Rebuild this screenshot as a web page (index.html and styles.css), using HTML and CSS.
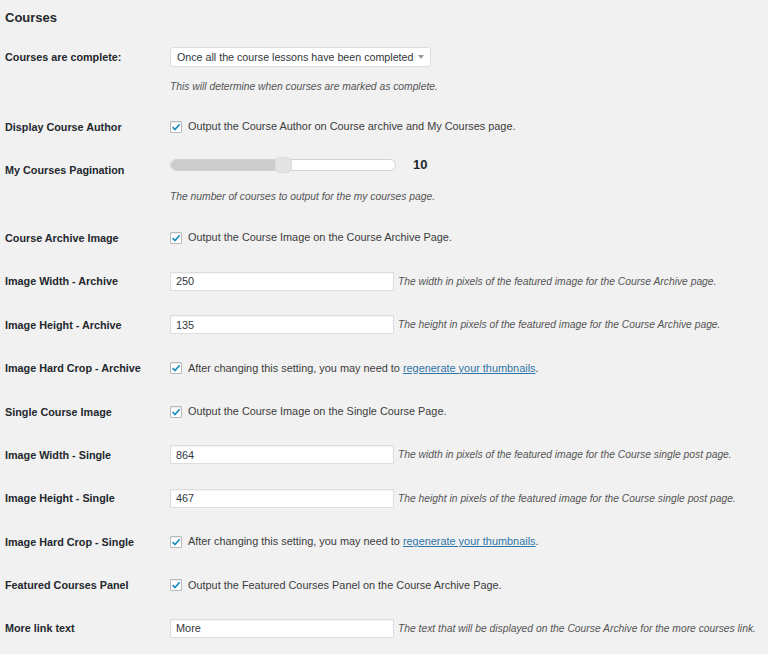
FILE: index.html
```html
<!DOCTYPE html>
<html lang="en">
<head>
<meta charset="utf-8">
<title>Courses settings</title>
<link rel="stylesheet" href="styles.css">
</head>
<body>
<div class="wrap">
  <h2 class="title">Courses</h2>

  <div class="row row-select">
    <div class="label">Courses are complete:</div>
    <div class="field">
      <div class="select">
        <span class="sel-text">Once all the course lessons have been completed</span>
        <span class="caret"></span>
      </div>
      <p class="desc desc-block">This will determine when courses are marked as complete.</p>
    </div>
  </div>

  <div class="row">
    <div class="label">Display Course Author</div>
    <div class="field line">
      <span class="cb"><svg viewBox="0 0 12 12" width="12" height="12"><path d="M2.6 6.2 L5 8.6 L9.6 3.2" fill="none" stroke="#1e8cbe" stroke-width="1.7"/></svg></span>
      <span class="text">Output the Course Author on Course archive and My Courses page.</span>
    </div>
  </div>

  <div class="row row-slider">
    <div class="label">My Courses Pagination</div>
    <div class="field">
      <div class="slider-line">
        <div class="track">
          <div class="fill"></div>
          <div class="thumb"></div>
        </div>
        <span class="value">10</span>
      </div>
      <p class="desc desc-block">The number of courses to output for the my courses page.</p>
    </div>
  </div>

  <div class="row">
    <div class="label">Course Archive Image</div>
    <div class="field line">
      <span class="cb"><svg viewBox="0 0 12 12" width="12" height="12"><path d="M2.6 6.2 L5 8.6 L9.6 3.2" fill="none" stroke="#1e8cbe" stroke-width="1.7"/></svg></span>
      <span class="text">Output the Course Image on the Course Archive Page.</span>
    </div>
  </div>

  <div class="row">
    <div class="label">Image Width - Archive</div>
    <div class="field line">
      <span class="input">250</span>
      <span class="desc">The width in pixels of the featured image for the Course Archive page.</span>
    </div>
  </div>

  <div class="row">
    <div class="label">Image Height - Archive</div>
    <div class="field line">
      <span class="input">135</span>
      <span class="desc">The height in pixels of the featured image for the Course Archive page.</span>
    </div>
  </div>

  <div class="row">
    <div class="label">Image Hard Crop - Archive</div>
    <div class="field line">
      <span class="cb"><svg viewBox="0 0 12 12" width="12" height="12"><path d="M2.6 6.2 L5 8.6 L9.6 3.2" fill="none" stroke="#1e8cbe" stroke-width="1.7"/></svg></span>
      <span class="text">After changing this setting, you may need to <a href="#">regenerate your thumbnails</a>.</span>
    </div>
  </div>

  <div class="row">
    <div class="label">Single Course Image</div>
    <div class="field line">
      <span class="cb"><svg viewBox="0 0 12 12" width="12" height="12"><path d="M2.6 6.2 L5 8.6 L9.6 3.2" fill="none" stroke="#1e8cbe" stroke-width="1.7"/></svg></span>
      <span class="text">Output the Course Image on the Single Course Page.</span>
    </div>
  </div>

  <div class="row">
    <div class="label">Image Width - Single</div>
    <div class="field line">
      <span class="input">864</span>
      <span class="desc">The width in pixels of the featured image for the Course single post page.</span>
    </div>
  </div>

  <div class="row">
    <div class="label">Image Height - Single</div>
    <div class="field line">
      <span class="input">467</span>
      <span class="desc">The height in pixels of the featured image for the Course single post page.</span>
    </div>
  </div>

  <div class="row">
    <div class="label">Image Hard Crop - Single</div>
    <div class="field line">
      <span class="cb"><svg viewBox="0 0 12 12" width="12" height="12"><path d="M2.6 6.2 L5 8.6 L9.6 3.2" fill="none" stroke="#1e8cbe" stroke-width="1.7"/></svg></span>
      <span class="text">After changing this setting, you may need to <a href="#">regenerate your thumbnails</a>.</span>
    </div>
  </div>

  <div class="row">
    <div class="label">Featured Courses Panel</div>
    <div class="field line">
      <span class="cb"><svg viewBox="0 0 12 12" width="12" height="12"><path d="M2.6 6.2 L5 8.6 L9.6 3.2" fill="none" stroke="#1e8cbe" stroke-width="1.7"/></svg></span>
      <span class="text">Output the Featured Courses Panel on the Course Archive Page.</span>
    </div>
  </div>

  <div class="row">
    <div class="label">More link text</div>
    <div class="field line">
      <span class="input">More</span>
      <span class="desc">The text that will be displayed on the Course Archive for the more courses link.</span>
    </div>
  </div>
</div>
</body>
</html>
```

FILE: styles.css
```css
html, body {
  margin: 0;
  padding: 0;
  background: #f1f1f1;
}
body {
  font-family: "Liberation Sans", Arial, sans-serif;
  color: #444;
  font-size: 10.9px;
}
.wrap {
  padding-left: 5px;
  padding-top: 9.5px;
}
.title {
  margin: 0 0 9.8px 0;
  font-size: 13px;
  line-height: 16px;
  font-weight: bold;
  color: #23282d;
}
.row {
  display: grid;
  grid-template-columns: 165px 1fr;
  height: 43.4px;
}
.row-select { height: 70px; }
.row-slider { height: 67.6px; }
.label {
  padding-top: 15.7px;
  line-height: 13px;
  font-size: 10.8px;
  font-weight: bold;
  color: #23282d;
}
.field {
  padding-top: 11.7px;
}
.line {
  display: flex;
  align-items: center;
  height: 20px;
  white-space: nowrap;
}
.cb {
  width: 12px;
  height: 12px;
  box-sizing: border-box;
  border: 1px solid #b4b9be;
  background: #fff;
  border-radius: 1px;
  box-shadow: inset 0 1px 1px rgba(0,0,0,0.08);
  display: flex;
  margin-right: 6px;
  flex: none;
}
.cb svg { display: block; margin: -1px; }
.text {
  line-height: 13px;
  color: #3c3c3c;
}
.text a {
  color: #2e75a8;
  text-decoration: underline;
}
.input {
  width: 224px;
  height: 19px;
  box-sizing: border-box;
  background: #fff;
  border: 1px solid #ddd;
  box-shadow: inset 0 1px 2px rgba(0,0,0,0.05);
  padding-left: 5px;
  display: flex;
  align-items: center;
  color: #32373c;
  flex: none;
  margin-right: 4px;
}
.desc {
  font-style: italic;
  font-size: 10.3px;
  color: #555;
  line-height: 13px;
  white-space: nowrap;
}
.desc-block {
  margin: 0;
  font-size: 10.3px;
}
.select {
  width: 261px;
  height: 20px;
  box-sizing: border-box;
  background: #fff;
  border: 1px solid #ddd;
  border-radius: 3px;
  display: flex;
  align-items: center;
  justify-content: space-between;
  padding: 0 6px 0 6px;
  color: #32373c;
  white-space: nowrap;
  overflow: hidden;
}
.sel-text { font-size: 10.7px; }
.caret {
  width: 0;
  height: 0;
  border-left: 3px solid transparent;
  border-right: 3px solid transparent;
  border-top: 4px solid #999;
  flex: none;
}
.row-select .desc-block {
  margin-top: 13.5px;
}
.row-slider .field {
  padding-top: 10.3px;
}
.slider-line {
  display: flex;
  align-items: center;
  height: 12px;
}
.track {
  position: relative;
  width: 226px;
  height: 12px;
  box-sizing: border-box;
  border: 1px solid #d4d4d4;
  border-radius: 6px;
  background: #fff;
  flex: none;
}
.fill {
  width: 107px;
  height: 100%;
  background: #cccccc;
  border-radius: 6px 0 0 6px;
}
.thumb {
  position: absolute;
  left: 104px;
  top: -3px;
  width: 17px;
  height: 16px;
  box-sizing: border-box;
  background: #e4e4e4;
  border: 1px solid #dcdcdc;
  border-radius: 5px;
}
.value {
  margin-left: 17px;
  font-size: 13px;
  font-weight: bold;
  color: #23282d;
}
.row-slider .desc-block {
  margin-top: 19.5px;
}
```
